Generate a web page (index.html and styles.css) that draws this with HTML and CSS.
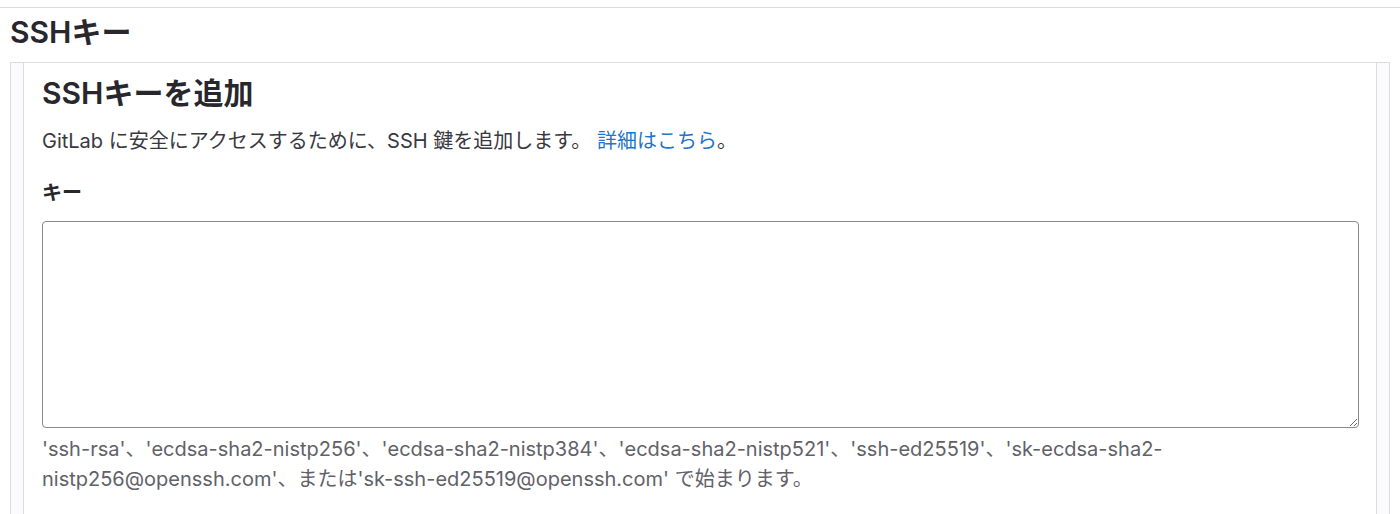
FILE: index.html
```html
<!DOCTYPE html>
<html lang="ja">
<head>
<meta charset="utf-8">
<link rel="stylesheet" href="styles.css">
</head>
<body>
<div class="page">
  <h2 class="page-title">SSHキー</h2>
  <div class="panel">
    <div class="panel-inner">
      <h3 class="section-title">SSHキーを追加</h3>
      <p class="desc">GitLab に安全にアクセスするために、SSH 鍵を追加します。 <a href="#" class="link">詳細はこちら</a>。</p>
      <label class="field-label" for="key">キー</label>
      <textarea id="key" class="key-input"></textarea>
      <p class="help">'ssh-rsa'、'ecdsa-sha2-nistp256'、'ecdsa-sha2-nistp384'、'ecdsa-sha2-nistp521'、'ssh-ed25519'、'sk-ecdsa-sha2-nistp256@openssh.com'、または'sk-ssh-ed25519@openssh.com' で始まります。</p>
    </div>
  </div>
</div>
</body>
</html>
```

FILE: styles.css
```css
html, body {
  margin: 0;
  padding: 0;
  background: #ffffff;
}
body {
  font-family: "Inter", "Noto Sans CJK JP", sans-serif;
  color: #3a383f;
  overflow: hidden;
}
.page {
  margin-top: 7px;
  border-top: 1px solid #dcdcde;
}
.page-title {
  margin: 4px 0 0 0;
  padding-left: 10px;
  font-size: 30px;
  line-height: 40px;
  font-weight: 600;
  color: #28272d;
}
.panel {
  margin: 10px 10px 0 10px;
  border: 1px solid #dcdcde;
  border-bottom: none;
  background: #fbfafd;
  padding: 0 12px;
  height: 460px;
}
.panel-inner {
  background: #ffffff;
  border-left: 1px solid #dcdcde;
  border-right: 1px solid #dcdcde;
  padding: 10px 17px 0 18px;
  height: 100%;
  display: flex;
  flex-direction: column;
  align-items: stretch;
}
.section-title {
  margin: 0;
  font-size: 30px;
  line-height: 40px;
  font-weight: 600;
  color: #28272d;
}
.desc {
  margin: 13px 0 0 0;
  font-size: 20px;
  line-height: 30px;
}
.link {
  color: #1f75cb;
  text-decoration: none;
}
.field-label {
  margin-top: 22px;
  font-size: 20px;
  line-height: 30px;
  font-weight: 600;
  color: #28272d;
}
.key-input {
  margin-top: 13px;
  height: 207px;
  box-sizing: border-box;
  border: 1px solid #89888d;
  border-radius: 4px;
  background: #fff;
  resize: vertical;
  font: inherit;
}
.help {
  margin: 6px 0 0 0;
  font-size: 20px;
  line-height: 30px;
  color: #626168;
}
```
